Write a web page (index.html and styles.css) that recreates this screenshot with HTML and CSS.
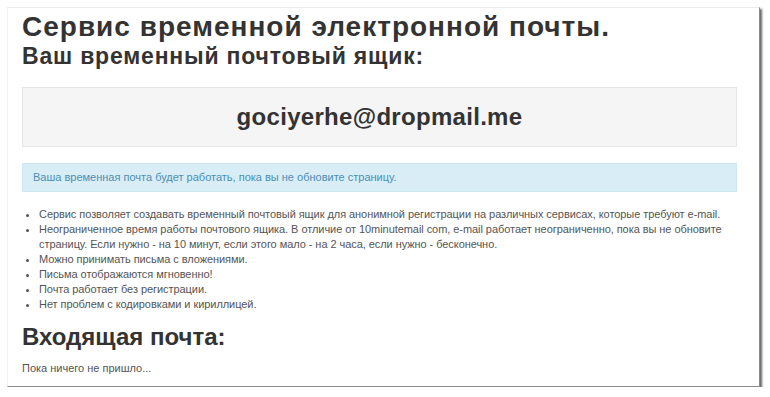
FILE: index.html
```html
<!DOCTYPE html>
<html lang="ru">
<head>
<meta charset="utf-8">
<link rel="stylesheet" href="styles.css">
</head>
<body>
<div class="card">
  <h1 class="title">Сервис временной электронной почты.</h1>
  <h2 class="subtitle">Ваш временный почтовый ящик:</h2>
  <div class="well">gociyerhe@dropmail.me</div>
  <div class="alert">Ваша временная почта будет работать, пока вы не обновите страницу.</div>
  <ul class="features">
    <li>Сервис позволяет создавать временный почтовый ящик для анонимной регистрации на различных сервисах, которые требуют e-mail.</li>
    <li>Неограниченное время работы почтового ящика. В отличие от 10minutemail com, e-mail работает неограниченно, пока вы не обновите страницу. Если нужно - на 10 минут, если этого мало - на 2 часа, если нужно - бесконечно.</li>
    <li>Можно принимать письма с вложениями.</li>
    <li>Письма отображаются мгновенно!</li>
    <li>Почта работает без регистрации.</li>
    <li>Нет проблем с кодировками и кириллицей.</li>
  </ul>
  <h3 class="inbox-title">Входящая почта:</h3>
  <p class="inbox-empty">Пока ничего не пришло...</p>
</div>
</body>
</html>
```
FILE: styles.css
```css
html, body {
  margin: 0;
  padding: 0;
  background: #fff;
}
body {
  padding: 7px 10px 0 7px;
  font-family: "Liberation Sans", Arial, sans-serif;
  color: #333;
}
.card {
  box-sizing: border-box;
  width: 753px;
  height: 380px;
  background: #fff;
  border-top: 1px solid #ececec;
  border-left: 1px solid #f2f2f2;
  border-right: 1px solid #8a8a8a;
  border-bottom: 1px solid #8a8a8a;
  box-shadow: 2px 2px 2px rgba(0, 0, 0, 0.6);
  padding: 4px 22px 0 14px;
}
.title {
  margin: 0;
  font-size: 28px;
  line-height: 30px;
  font-weight: bold;
  letter-spacing: 1px;
  color: #333;
}
.subtitle {
  margin: 1px 0 0;
  font-size: 23px;
  line-height: 26px;
  font-weight: bold;
  letter-spacing: 0.8px;
  color: #333;
}
.well {
  margin-top: 18px;
  height: 60px;
  box-sizing: border-box;
  background: #f5f5f5;
  border: 1px solid #e6e6e6;
  text-align: center;
  font-size: 24px;
  line-height: 58px;
  font-weight: bold;
  letter-spacing: 0.3px;
  color: #333;
}
.alert {
  margin-top: 16px;
  height: 29px;
  box-sizing: border-box;
  background: #d9edf7;
  border: 1px solid #cde8f2;
  color: #4a8fb5;
  font-size: 11px;
  line-height: 27px;
  padding-left: 10px;
}
.features {
  margin: 15px 0 0;
  padding-left: 17px;
  font-size: 11px;
  line-height: 15px;
  letter-spacing: -0.06px;
  color: #555;
}
.inbox-title {
  margin: 11px 0 0;
  font-size: 24px;
  line-height: 28px;
  font-weight: bold;
  color: #333;
}
.inbox-empty {
  margin: 10px 0 0;
  font-size: 11px;
  line-height: 15px;
  color: #555;
}
```
